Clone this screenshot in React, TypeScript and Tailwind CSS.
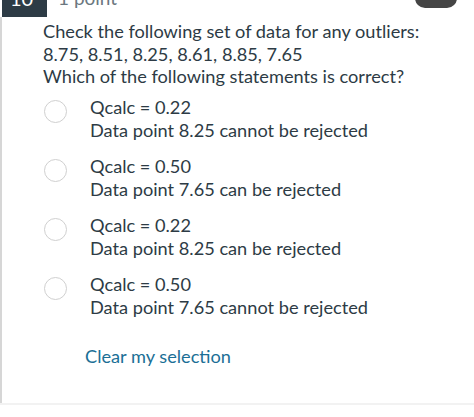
export default function App() {
  const options = [
    { q: "Qcalc = 0.22", s: "Data point 8.25 cannot be rejected" },
    { q: "Qcalc = 0.50", s: "Data point 7.65 can be rejected" },
    { q: "Qcalc = 0.22", s: "Data point 8.25 can be rejected" },
    { q: "Qcalc = 0.50", s: "Data point 7.65 cannot be rejected" },
  ];

  return (
    <div
      className="relative h-[417px] w-[474px] overflow-hidden bg-white text-[#2d3b45]"
      style={{ fontFamily: "Lato, 'Open Sans', sans-serif" }}
    >
      {/* header strip */}
      <div className="flex h-[17px] items-start">
        <div className="h-[17px] w-[45px] ml-[2px] overflow-hidden bg-[#2d3b45] pl-[8px] text-[20px] leading-[14px] text-white">
          <span className="block -translate-y-[9px]">10</span>
        </div>
        <div className="ml-[11px] text-[19px] leading-[14px] text-[#6b7780] -translate-y-[9px]">1 point</div>
      </div>
      <div className="absolute right-[17px] top-[-12px] h-[20px] w-[42px] rounded-full bg-[#454545]" />

      <div className="border-l-[2px] border-[#d6d6d6] h-[386px]">
        <div className="pl-[41px] pt-[3px] text-[18.2px] leading-[22.5px]">
          <p>Check the following set of data for any outliers:</p>
          <p>8.75, 8.51, 8.25, 8.61, 8.85, 7.65</p>
          <p>Which of the following statements is correct?</p>
        </div>

        <div className="mt-[8px] flex flex-col gap-[13px] pl-[42px]">
          {options.map((o, i) => (
            <label key={i} className="flex items-start">
              <span className="mt-[4px] h-[23px] w-[23px] shrink-0 rounded-full border-[1.5px] border-[#d0d0d0] bg-white" />
              <span className="ml-[23px] text-[18.2px] leading-[23px]">
                <span className="block">{o.q}</span>
                <span className="block">{o.s}</span>
              </span>
            </label>
          ))}
        </div>

        <div className="mt-[26px] pl-[83px] text-[18.2px] leading-[23px] text-[#1b6f96]">
          Clear my selection
        </div>
      </div>
      <div className="h-[2px] bg-[#f2f2f2]" />
    </div>
  );
}
